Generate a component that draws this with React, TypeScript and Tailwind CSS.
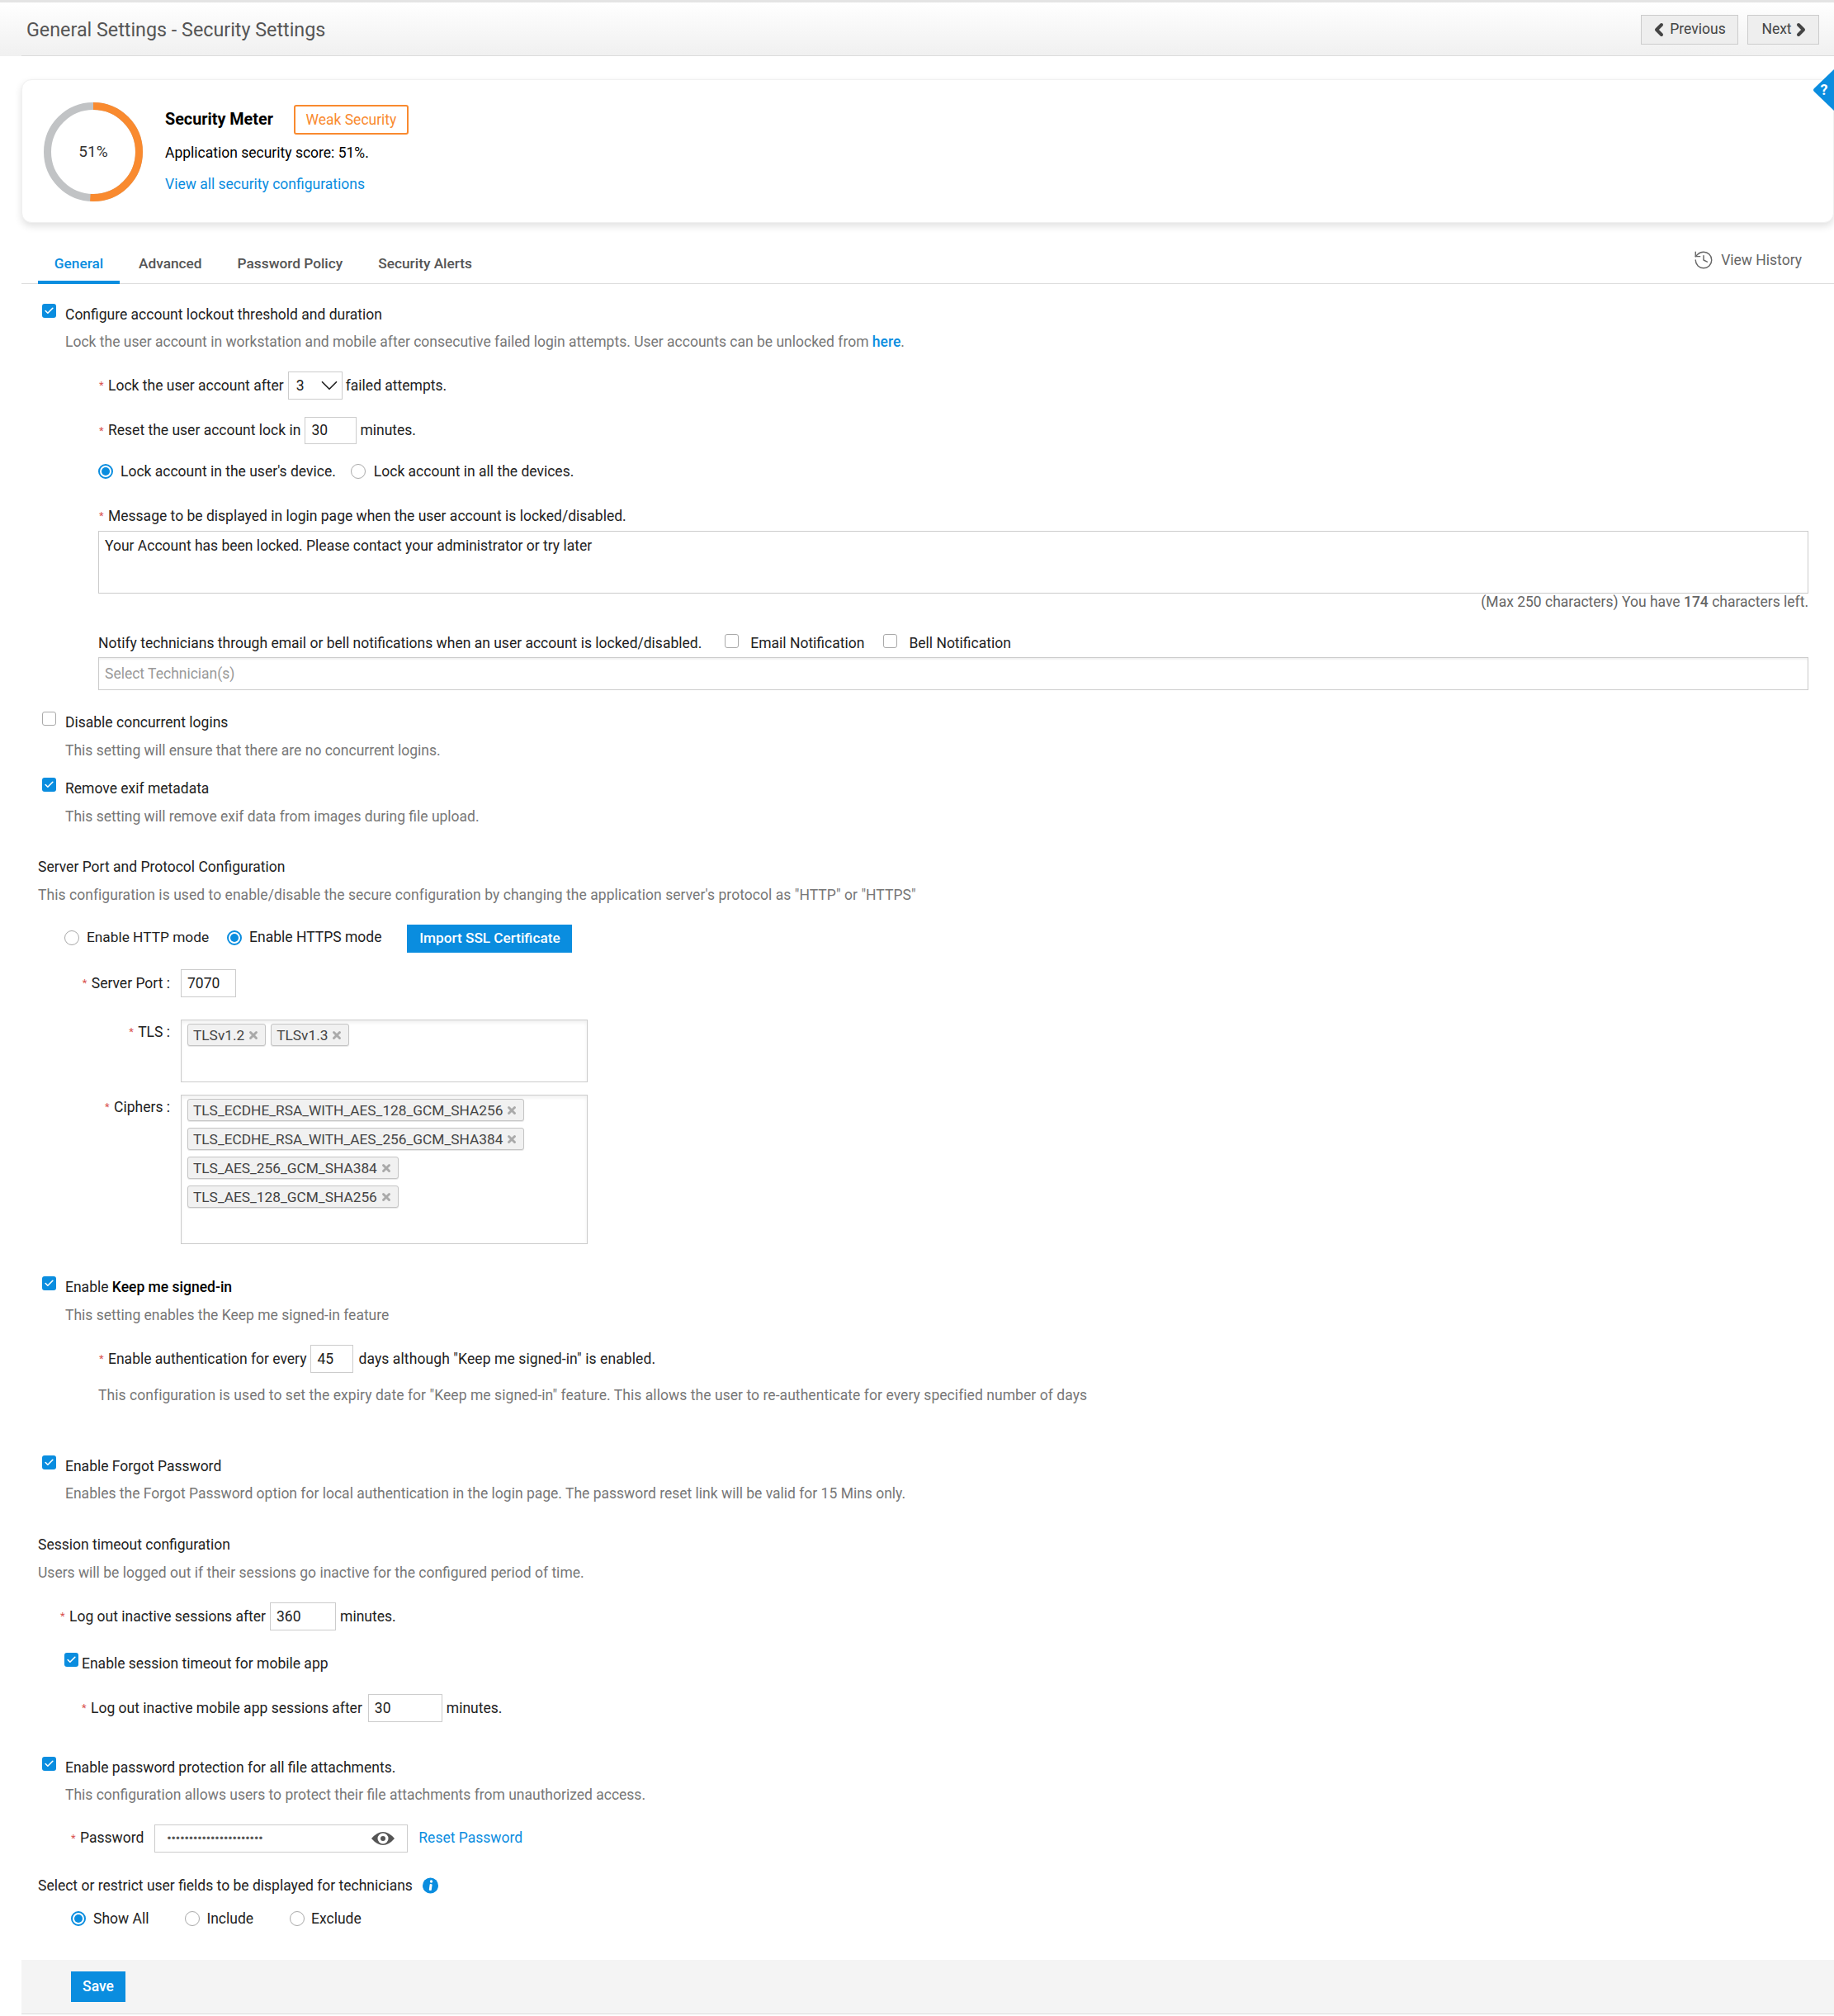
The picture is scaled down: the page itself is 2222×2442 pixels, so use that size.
import React from 'react';
import { Check, ChevronDown, ChevronLeft, ChevronRight, History, X } from 'lucide-react';

function CheckBox({ checked = false }: { checked?: boolean }) {
  if (!checked) return <span className="block w-[17px] h-[17px] shrink-0 rounded-[3px] border border-[#a9a9a9] bg-white" />;
  return (
    <span className="flex items-center justify-center w-[17px] h-[17px] shrink-0 rounded-[3px] bg-[#0a8ddf]">
      <Check size={13} strokeWidth={3} className="text-white" />
    </span>
  );
}

function Radio({ checked = false }: { checked?: boolean }) {
  if (!checked) return <span className="block w-[18px] h-[18px] shrink-0 rounded-full border border-[#a9a9a9] bg-white" />;
  return (
    <span className="flex items-center justify-center w-[18px] h-[18px] shrink-0 rounded-full border-2 border-[#0a8ddf] bg-white">
      <span className="block w-[10px] h-[10px] rounded-full bg-[#0a8ddf]" />
    </span>
  );
}

function Star() {
  return <span className="text-[#d9534f] text-[13px] w-[11px] shrink-0">*</span>;
}

function Chip({ label }: { label: string }) {
  return (
    <span className="flex items-center h-[27px] w-fit pl-[6px] pr-[9px] pt-[2px] gap-[6px] rounded-[3px] border border-[#c4c4c4] bg-[#f1f1f1] text-[#444] text-[17.3px] shadow-[0_1px_1px_rgba(0,0,0,0.1)]">
      {label}
      <X size={14} strokeWidth={5} className="text-[#aaa] -mx-[2px] -mt-[2px]" />
    </span>
  );
}

function Desc({ className, children }: { className: string; children: React.ReactNode }) {
  return <div className={`flex items-center h-6 pt-[2px] text-[#777] ${className}`}>{children}</div>;
}

function CheckRow({ checked, className, children }: { checked?: boolean; className: string; children: React.ReactNode }) {
  return (
    <div className={`relative flex items-center h-6 pt-[2px] pl-[53px] ${className}`}>
      <span className="absolute left-[25px] top-0"><CheckBox checked={checked} /></span>
      {children}
    </div>
  );
}

const inputCls = 'flex items-center h-full border border-[#ccc] bg-white';

export default function App() {
  return (
    <div className="w-[2222px] h-[2442px] bg-white overflow-hidden font-['Roboto',sans-serif] text-[17.5px] text-[#222]">
      <div className="h-[3px] bg-[#e4e4e4]" />
      <div className="relative flex items-center justify-between h-[65px] pl-[32px] pr-[18px] bg-gradient-to-b from-white to-[#f0f0f0]">
        <h1 className="mt-[2px] text-[23.3px] font-normal text-[#555]">General Settings - Security Settings</h1>
        <div className="flex gap-[11px] text-[#444]">
          <button className="flex items-center justify-center gap-[8px] w-[118px] h-[36px] pl-[2px] bg-[#eee] border border-[#ccc]">
            <ChevronLeft size={24} strokeWidth={4} className="-mx-[7px]" />Previous
          </button>
          <button className="flex items-center justify-center gap-[6px] w-[87px] h-[36px] bg-[#eee] border border-[#ccc]">
            Next<ChevronRight size={24} strokeWidth={4} className="-mx-[7px]" />
          </button>
        </div>
        <div className="absolute left-[26px] right-0 bottom-0 h-px bg-[#dcdcdc]" />
      </div>

      <div className="relative ml-[26px] mt-[28px] h-[174px] flex items-center pl-[26px] rounded-l-[12px] rounded-r-[12px] border border-[#f0f0f0] bg-white shadow-[0_4px_10px_rgba(0,0,0,0.12)]">
        <svg width="120" height="120" viewBox="0 0 120 120" className="shrink-0 mt-[1px]">
          <circle cx="60" cy="60" r="55.5" fill="none" stroke="#c1c3c5" strokeWidth="9" />
          <circle cx="60" cy="60" r="55.5" fill="none" stroke="#f98a2f" strokeWidth="9" strokeDasharray="177.8 348.7" transform="rotate(-90 60 60)" />
        </svg>
        <span className="absolute left-[61px] w-[50px] mt-[3px] text-center text-[19px] text-[#333]">51%</span>
        <div className="ml-[27px] flex flex-col -mt-[3px]">
          <div className="flex items-center gap-[25px] h-[36px]">
            <span className="text-[19.8px] font-bold text-black">Security Meter</span>
            <span className="flex items-center justify-center w-[139px] h-[36px] rounded-[3px] border-2 border-[#f98a2f] text-[#f98a2f]">Weak Security</span>
          </div>
          <div className="mt-[9px] text-black">Application security score: 51%.</div>
          <div className="mt-[11px] text-[#0a8ddf]">View all security configurations</div>
        </div>
        <svg width="26" height="50" viewBox="0 0 26 50" className="absolute -right-px -top-[13px]">
          <path d="M26 0 L2 23 Q0 25 2 27 L26 50 Z" fill="#0a8ddf" />
          <text x="14" y="31" fill="#fff" fontSize="18" fontWeight="700" fontFamily="Roboto" textAnchor="middle">?</text>
        </svg>
      </div>

      <div className="relative ml-[26px] mt-[27px] h-[47px] flex items-end border-b border-[#ddd] font-medium text-[17.3px] text-[#555]">
        <div className="flex items-center justify-center ml-[20px] w-[99px] h-[47px] pt-[2px] text-[#0a8ddf] border-b-4 border-[#0a8ddf] -mb-px">General</div>
        <div className="flex items-center h-[47px] ml-[23px] pt-[1px]">Advanced</div>
        <div className="flex items-center h-[47px] ml-[43px] pt-[1px]">Password Policy</div>
        <div className="flex items-center h-[47px] ml-[43px] pt-[1px]">Security Alerts</div>
        <div className="absolute right-[39px] top-[5px] flex items-center gap-[8px] font-normal text-[17.5px] text-[#666]">
          <History size={26} strokeWidth={1.3} />View History
        </div>
      </div>

      <div className="ml-[26px]">
        <CheckRow checked className="mt-[24px]">Configure account lockout threshold and duration</CheckRow>
        <Desc className="mt-[9px] pl-[53px]">Lock the user account in workstation and mobile after consecutive failed login attempts. User accounts can be unlocked from&nbsp;<span className="font-medium text-[#0a8ddf]">here</span>.</Desc>

        <div className="flex items-center h-[34px] mt-[25px] pl-[94px]">
          <Star />Lock the user account after
          <span className="flex items-center justify-between w-[66px] h-full ml-[5px] pl-[9px] border border-[#ccc]">3<ChevronDown size={34} strokeWidth={1.2} className="-mr-[2px]" /></span>
          <span className="ml-[4px]">failed attempts.</span>
        </div>
        <div className="flex items-center h-[33px] mt-[21px] pl-[94px]">
          <Star />Reset the user account lock in
          <span className={`${inputCls} w-[63px] ml-[5px] pl-[7px]`}>30</span>
          <span className="ml-[4px]">minutes.</span>
        </div>
        <div className="flex items-center h-6 mt-[21px] pl-[93px]">
          <Radio checked /><span className="ml-[9px]">Lock account in the user's device.</span>
          <span className="ml-[18px]"><Radio /></span><span className="ml-[10px]">Lock account in all the devices.</span>
        </div>
        <div className="flex items-center h-6 mt-[30px] pl-[94px]"><Star />Message to be displayed in login page when the user account is locked/disabled.</div>
        <div className="mt-[6px] ml-[93px] mr-[31px] h-[76px] pl-[7px] pt-[4px] border border-[#ccc]">Your Account has been locked. Please contact your administrator or try later</div>
        <div className="flex items-center justify-end h-5 mr-[31px] text-[#666]">(Max 250 characters) You have&nbsp;<b className="font-medium">174</b>&nbsp;characters left.</div>
        <div className="flex items-center h-6 pt-[2px] mt-[27px] pl-[93px]">
          Notify technicians through email or bell notifications when an user account is locked/disabled.
          <span className="ml-[28px] -mt-[5px]"><CheckBox /></span><span className="ml-[14px]">Email Notification</span>
          <span className="ml-[23px] -mt-[5px]"><CheckBox /></span><span className="ml-[14px]">Bell Notification</span>
        </div>
        <div className="flex items-center mt-[6px] ml-[93px] mr-[31px] h-[40px] pl-[7px] border border-[#ccc] text-[#999] shadow-[inset_0_2px_2px_rgba(0,0,0,0.06)]">Select Technician(s)</div>

        <CheckRow className="mt-[26px]">Disable concurrent logins</CheckRow>
        <Desc className="mt-[10px] pl-[53px]">This setting will ensure that there are no concurrent logins.</Desc>
        <CheckRow checked className="mt-[22px]">Remove exif metadata</CheckRow>
        <Desc className="mt-[10px] pl-[53px]">This setting will remove exif data from images during file upload.</Desc>

        <div className="flex items-center h-6 pt-[2px] mt-[37px] pl-[20px]">Server Port and Protocol Configuration</div>
        <Desc className="mt-[10px] pl-[20px] tracking-[0.05px]">This configuration is used to enable/disable the secure configuration by changing the application server's protocol as "HTTP" or "HTTPS"</Desc>
        <div className="flex items-center h-[34px] mt-[25px] pl-[52px]">
          <span className="-mt-[3px]"><Radio /></span><span className="ml-[9px] -mt-[3px] text-[17.3px]">Enable HTTP mode</span>
          <span className="ml-[22px] -mt-[3px]"><Radio checked /></span><span className="ml-[9px] -mt-[3px]">Enable HTTPS mode</span>
          <button className="flex items-center justify-center w-[200px] h-full ml-[31px] bg-[#0a8ddf] text-white text-[17.2px] font-medium">Import SSL Certificate</button>
        </div>
        <div className="flex items-center h-[34px] mt-[20px]">
          <div className="flex items-center justify-end w-[180px]"><Star />Server Port :</div>
          <span className={`${inputCls} w-[67px] ml-[13px] pl-[7px]`}>7070</span>
        </div>
        <div className="flex mt-[27px]">
          <div className="flex items-center justify-end w-[180px] h-[30px]"><Star />TLS :</div>
          <div className="flex gap-[6px] w-[493px] h-[76px] ml-[13px] pl-[7px] pt-[4px] border border-[#ccc] shadow-[inset_0_3px_4px_rgba(0,0,0,0.06)]">
            <Chip label="TLSv1.2" /><Chip label="TLSv1.3" />
          </div>
        </div>
        <div className="flex mt-[15px]">
          <div className="flex items-center justify-end w-[180px] h-[30px]"><Star />Ciphers :</div>
          <div className="flex flex-col gap-[8px] w-[493px] h-[181px] ml-[13px] pl-[7px] pt-[4px] border border-[#ccc] shadow-[inset_0_3px_4px_rgba(0,0,0,0.06)]">
            <Chip label="TLS_ECDHE_RSA_WITH_AES_128_GCM_SHA256" />
            <Chip label="TLS_ECDHE_RSA_WITH_AES_256_GCM_SHA384" />
            <Chip label="TLS_AES_256_GCM_SHA384" />
            <Chip label="TLS_AES_128_GCM_SHA256" />
          </div>
        </div>

        <CheckRow checked className="mt-[39px]"><span>Enable <b className="font-medium text-black">Keep me signed-in</b></span></CheckRow>
        <Desc className="mt-[10px] pl-[53px]">This setting enables the Keep me signed-in feature</Desc>
        <div className="flex items-center h-[34px] mt-[25px] pl-[94px]">
          <Star />Enable authentication for every
          <span className={`${inputCls} w-[52px] ml-[5px] pl-[7px]`}>45</span>
          <span className="ml-[6px] tracking-[0.1px]">days although "Keep me signed-in" is enabled.</span>
        </div>
        <Desc className="mt-[14px] pl-[93px] tracking-[0.06px]">This configuration is used to set the expiry date for "Keep me signed-in" feature. This allows the user to re-authenticate for every specified number of days</Desc>

        <CheckRow checked className="mt-[62px]">Enable Forgot Password</CheckRow>
        <Desc className="mt-[9px] pl-[53px]">Enables the Forgot Password option for local authentication in the login page. The password reset link will be valid for 15 Mins only.</Desc>

        <div className="flex items-center h-6 pt-[2px] mt-[38px] pl-[20px]">Session timeout configuration</div>
        <Desc className="mt-[10px] pl-[20px]">Users will be logged out if their sessions go inactive for the configured period of time.</Desc>
        <div className="flex items-center h-[34px] mt-[25px] pl-[47px]">
          <Star />Log out inactive sessions after
          <span className={`${inputCls} w-[80px] ml-[5px] pl-[7px]`}>360</span>
          <span className="ml-[5px]">minutes.</span>
        </div>
        <div className="relative flex items-center h-6 pt-[2px] mt-[27px] pl-[73px]">
          <span className="absolute left-[52px] top-0"><CheckBox checked /></span>Enable session timeout for mobile app
        </div>
        <div className="flex items-center h-[34px] mt-[26px] pl-[73px]">
          <Star /><span className="pt-[1px]">Log out inactive mobile app sessions after</span>
          <span className={`${inputCls} w-[90px] ml-[7px] pl-[7px]`}>30</span>
          <span className="ml-[5px] pt-[1px]">minutes.</span>
        </div>

        <CheckRow checked className="mt-[42px]">Enable password protection for all file attachments.</CheckRow>
        <Desc className="mt-[9px] pl-[53px]">This configuration allows users to protect their file attachments from unauthorized access.</Desc>
        <div className="flex items-center h-[34px] mt-[25px] pl-[60px]">
          <Star /><span className="-mt-[2px]">Password</span>
          <span className={`${inputCls} justify-between w-[307px] ml-[13px] pl-[14px] pr-[14px]`}>
            <span className="text-[14.7px] font-bold text-[#555]">••••••••••••••••••••••</span>
            <svg width="30" height="20" viewBox="0 0 30 20">
              <path d="M1 10 Q15 -6 29 10 Q15 26 1 10 Z" fill="#555" />
              <circle cx="15" cy="10" r="6.5" fill="#fff" />
              <circle cx="15" cy="10" r="3" fill="#555" />
            </svg>
          </span>
          <span className="ml-[13px] -mt-[2px] text-[#0a8ddf]">Reset Password</span>
        </div>
        <div className="flex items-center h-6 pt-[2px] mt-[27px] pl-[20px]">
          Select or restrict user fields to be displayed for technicians
          <svg width="19" height="20" viewBox="0 0 19 20" className="ml-[12px]">
            <circle cx="9.5" cy="10" r="9.5" fill="#0a8ddf" />
            <rect x="8.2" y="8" width="3" height="8" rx="1" fill="#fff" transform="rotate(8 9.5 12)" />
            <circle cx="10.5" cy="5" r="1.7" fill="#fff" />
          </svg>
        </div>
        <div className="flex items-center h-6 pt-[2px] mt-[16px] pl-[60px]">
          <Radio checked /><span className="ml-[9px]">Show All</span>
          <span className="ml-[44px]"><Radio /></span><span className="ml-[8px]">Include</span>
          <span className="ml-[44px]"><Radio /></span><span className="ml-[8px]">Exclude</span>
        </div>
        <div className="flex items-center mt-[39px] h-[66px] pl-[60px] bg-[#f4f4f4] border-b border-[#ddd]">
          <button className="flex items-center justify-center w-[66px] h-[37px] bg-[#0a8ddf] text-white font-medium">Save</button>
        </div>
      </div>
    </div>
  );
}
